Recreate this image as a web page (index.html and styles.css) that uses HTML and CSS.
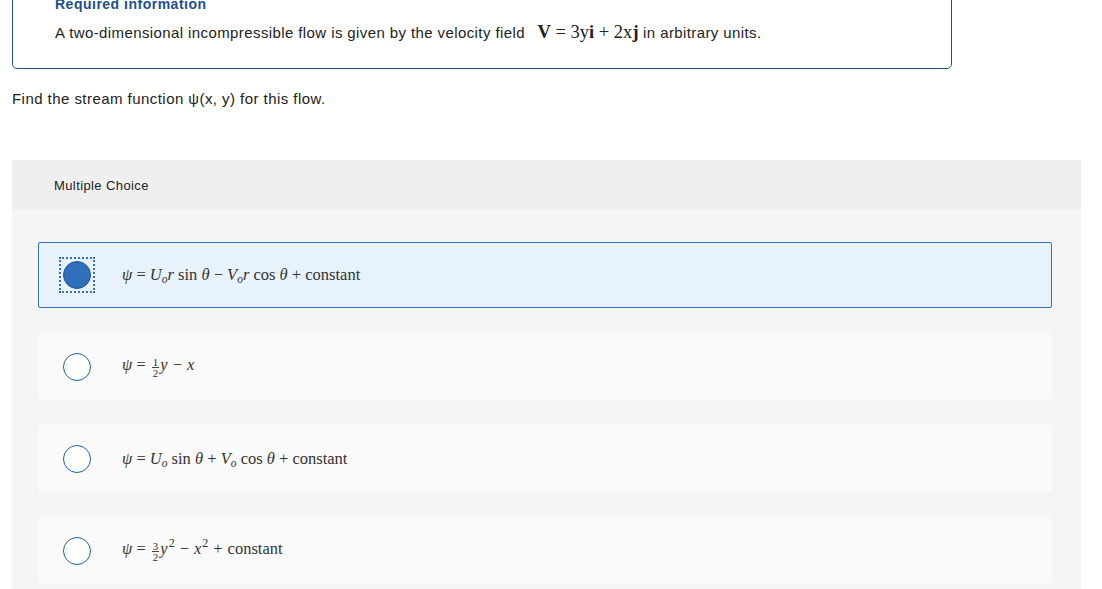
FILE: index.html
```html
<!DOCTYPE html>
<html>
<head>
<meta charset="utf-8">
<link rel="stylesheet" href="styles.css">
</head>
<body>
<div class="page">
  <section class="info">
    <h2 class="info-title">Required information</h2>
    <p class="info-text">A two-dimensional incompressible flow is given by the velocity field <span class="m m-up">V</span><span class="m"> = 3y</span><span class="m m-b">i</span><span class="m"> + 2x</span><span class="m m-b">j</span> in arbitrary units.</p>
  </section>

  <p class="question">Find the stream function ψ(x, y) for this flow.</p>

  <section class="mc">
    <div class="mc-head">Multiple Choice</div>
    <div class="mc-body">
      <div class="opt opt-sel">
        <span class="focus"><span class="radio radio-on"></span></span>
        <span class="math"><i>ψ</i> = <i>U<sub>o</sub>r</i> sin <i>θ</i> − <i>V<sub>o</sub>r</i> cos <i>θ</i> + constant</span>
      </div>
      <div class="opt">
        <span class="radio"></span>
        <span class="math"><i>ψ</i> = <span class="frac"><span class="num">1</span><span class="den">2</span></span><i>y</i><span class="op">−</span><i>x</i></span>
      </div>
      <div class="opt">
        <span class="radio"></span>
        <span class="math"><i>ψ</i> = <i>U<sub>o</sub></i> sin <i>θ</i> + <i>V<sub>o</sub></i> cos <i>θ</i> + constant</span>
      </div>
      <div class="opt">
        <span class="radio"></span>
        <span class="math"><i>ψ</i> = <span class="frac"><span class="num">3</span><span class="den">2</span></span><i>y</i><sup>2</sup><span class="op">−</span><i>x</i><sup>2</sup><span class="op">+</span>constant</span>
      </div>
    </div>
  </section>
</div>
</body>
</html>
```

FILE: styles.css
```css
* { box-sizing: border-box; }
html, body { margin: 0; padding: 0; background: #fff; }
body {
  font-family: "Liberation Sans", Arial, sans-serif;
  color: #222;
  overflow: hidden;
}
.page { padding: 0 21px 0 12px; }

.info {
  margin-top: -19px;
  width: 940px;
  border: 1px solid #1c4f8c;
  border-radius: 0 0 5px 5px;
  padding: 12px 20px 25px 42px;
}
.info-title {
  margin: 0;
  font-size: 14px;
  font-weight: 700;
  letter-spacing: 0.5px;
  color: #1d4f91;
  line-height: 20px;
}
.info-text {
  margin: 8px 0 0;
  font-size: 15px;
  letter-spacing: 0.4px;
  line-height: 20px;
  color: #222;
}
.m {
  font-family: "Liberation Serif", "DejaVu Serif", serif;
  font-size: 18.5px;
  letter-spacing: 0;
}
.m-up { font-weight: 700; margin-left: 8px; }
.m-b { font-weight: 700; }

.question {
  margin: 20px 0 0;
  font-size: 15px;
  letter-spacing: 0.45px;
  line-height: 20px;
  color: #222;
}

.mc {
  margin-top: 51px;
  width: 1069px;
  background: #f5f5f5;
}
.mc-head {
  background: #efefef;
  height: 50px;
  padding-left: 42px;
  display: flex;
  align-items: center;
  font-size: 13px;
  letter-spacing: 0.4px;
  color: #222;
}
.mc-body {
  padding: 32px 29px 6px 26px;
  display: flex;
  flex-direction: column;
  gap: 25px;
}
.opt {
  height: 67px;
  background: #fafafa;
  border-radius: 4px;
  display: flex;
  align-items: center;
  padding-left: 25px;
  gap: 31px;
}
.opt-sel {
  height: 66px;
  background: #e8f2fb;
  border: 1px solid #2f74c2;
  border-radius: 2px;
  padding-left: 20px;
  gap: 27px;
}
.focus {
  width: 36px;
  height: 36px;
  border: 2px dotted #2f74c2;
  display: flex;
  align-items: center;
  justify-content: center;
  flex: none;
}
.radio {
  width: 28px;
  height: 28px;
  border-radius: 50%;
  border: 1.5px solid #1f5fa3;
  background: #fff;
  flex: none;
}
.radio-on {
  background: #2f6fbb;
  border-color: #1f5595;
}
.math {
  display: block;
  font-family: "Liberation Serif", "DejaVu Serif", serif;
  font-size: 16.5px;
  line-height: 22px;
  color: #333;
  white-space: pre;
}
.math i { font-style: italic; }
.math sub { font-size: 11.5px; vertical-align: -3px; line-height: 0; }
.math sup { font-size: 12px; vertical-align: 7px; line-height: 0; margin-left: 1px; }
.op { margin: 0 5px; }
.frac {
  display: inline-block;
  vertical-align: -7px;
  text-align: center;
  font-size: 11px;
  line-height: 11px;
  margin: 0 1px 0 2px;
}
.frac .num, .frac .den { display: block; padding: 0 1px; }
.frac .num { border-bottom: 1px solid #444; line-height: 10px; }
```
